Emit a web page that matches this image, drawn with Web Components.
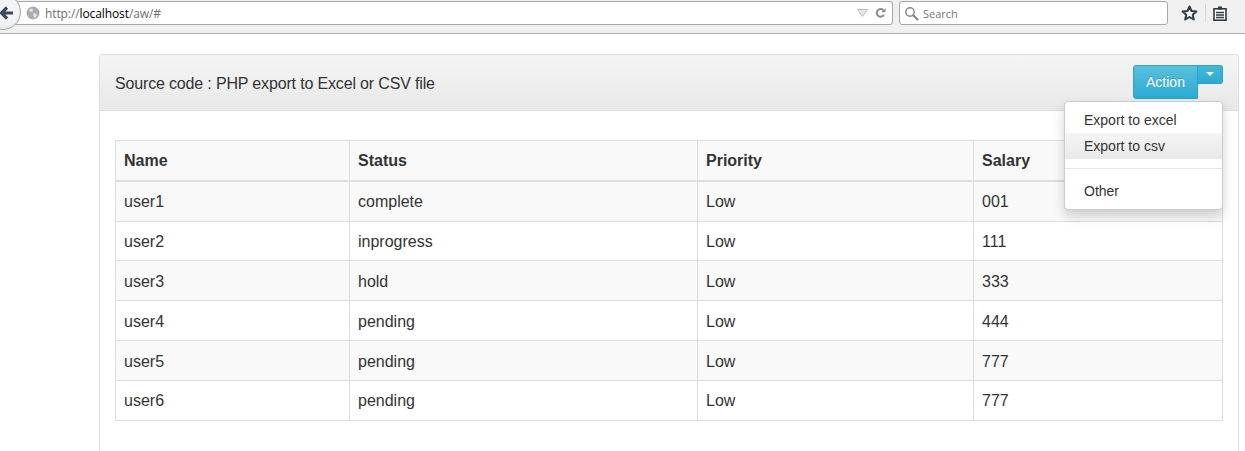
<!DOCTYPE html>
<html><head><meta charset="utf-8"><title>Export</title>
<style>html,body{margin:0;padding:0;background:#fff;overflow:hidden;height:451px}body{font-family:"Liberation Sans",Arial,sans-serif;color:#333}</style>
</head><body>
<browser-bar></browser-bar>
<export-panel heading="Source code : PHP export to Excel or CSV file">
  <action-menu slot="actions"></action-menu>
  <data-table></data-table>
</export-panel>
<script>
function def(name, html){
  customElements.define(name, class extends HTMLElement{
    connectedCallback(){
      if(this.shadowRoot) return;
      const r=this.attachShadow({mode:'open'});
      r.innerHTML=typeof html==='function'?html(this):html;
    }
  });
}
def('browser-bar',`<style>
:host{display:block;height:34px;box-sizing:border-box;background:#f0f0f0;border-bottom:1px solid #a9a9a9;position:relative;overflow:hidden}
.row{display:flex;align-items:flex-start;height:24px;padding-top:1px}
.url{margin-left:12px;flex:0 0 881px;height:24px;box-sizing:border-box;background:#fff;border:1px solid #a8a8a8;border-left:0;border-radius:0 3px 3px 0;display:flex;align-items:center;padding-left:14px;font:12px "Open Sans","Noto Sans",sans-serif;letter-spacing:-.1px;color:#6f6f6f}
.url b{font-weight:400;color:#000}
.url .txt{margin-left:5px;flex:1}
.search{margin-left:6px;flex:0 0 269px;height:24px;box-sizing:border-box;background:#fff;border:1px solid #a8a8a8;border-radius:3px;display:flex;align-items:center;padding-left:4px;font:11px "Open Sans","Noto Sans",sans-serif;color:#777}
.search span{margin-left:4px}
.tools{display:flex;align-items:center;height:24px;margin-left:13px}
.sep{width:1px;height:18px;background:#d8d8d8;margin:0 7px 0 7px}
.back{position:absolute;left:-15px;top:-6px;width:36px;height:36px;box-sizing:border-box;border-radius:50%;background:#f2f3f5;border:1px solid #a6a6a6;box-shadow:inset 0 -2px 3px rgba(0,0,0,.06)}
.back svg{position:absolute;left:13px;top:11px}
</style>
<div class="row">
<div class="url">
<svg width="14" height="14" viewBox="0 0 14 14"><circle cx="7" cy="7" r="6.5" fill="#a9adb0"/><path d="M3 3.500 6 2.500 7.500 4 6 6 4 5.500ZM7 7l3 .5 1 2-2.500 3L7.500 10Z" fill="#dfe1e3"/></svg>
<span class="txt">http://<b>localhost</b>/aw/#</span>
<svg width="11" height="8" viewBox="0 0 11 8"><path d="M.5.5h10L5.500 7.500Z" fill="#e6e8e8" stroke="#b9bdbd"/></svg>
<svg style="margin:0 6px 0 7px" width="11" height="12" viewBox="0 0 13 13"><path d="M10.500 8.500A4.500 4.500 0 1 1 9.800 3.200" fill="none" stroke="#8b8f92" stroke-width="2.400"/><path d="M7.500 5.500h5V.8Z" fill="#8b8f92"/></svg>
</div>
<div class="search">
<svg width="15" height="15" viewBox="0 0 15 15"><circle cx="6" cy="6" r="4.200" fill="#fff" stroke="#85898c" stroke-width="1.500"/><path d="M9.200 9.200 13.500 13.500" stroke="#85898c" stroke-width="2.200" stroke-linecap="round"/></svg>
<span>Search</span>
</div>
<div class="tools">
<svg width="17" height="16" viewBox="0 0 17 16"><path d="M8.500 1.500 10.500 6l4.900.5-3.700 3.200 1.100 4.800-4.300-2.500-4.300 2.500 1.100-4.800L1.600 6.500 6.500 6Z" fill="#fdfdfd" stroke="#2f3a45" stroke-width="2" stroke-linejoin="round"/></svg>
<span class="sep"></span>
<svg style="margin-left:0" width="14" height="15" viewBox="0 0 14 15"><rect x="1" y="2.800" width="12" height="11.400" fill="#fff" stroke="#2f3a45" stroke-width="1.600"/><rect x="5" y=".5" width="4" height="3" fill="#2f3a45"/><path d="M3 6.500h8M3 9h8M3 11.500h8" stroke="#2f3a45" stroke-width="1.300"/></svg>
</div>
</div>
<div class="back"><svg width="15" height="14" viewBox="0 0 15 14"><path d="M8 1.500 2.500 7 8 12.500M3 7H14" fill="none" stroke="#3c4a5a" stroke-width="3.200"/></svg></div>`);

def('export-panel',h=>`<style>
:host{display:block;box-sizing:border-box;margin:20px 6px 0 99px;height:397px;background:#fff;border:1px solid #ddd;border-bottom:0;border-radius:4px 4px 0 0}
header{height:56px;box-sizing:border-box;padding:2px 15px 0;display:flex;align-items:center;justify-content:space-between;background:linear-gradient(#f5f5f5,#e8e8e8);border-bottom:1px solid #ddd;border-radius:3px 3px 0 0}
h3{margin:0;font:400 16px/1.1 "Liberation Sans",Arial,sans-serif;letter-spacing:-.16px;color:#333}
::slotted(action-menu){margin-top:8px}
.body{padding:29px 15px 0 15px}
</style><header><h3>${h.getAttribute('heading')}</h3><slot name="actions"></slot></header><div class="body"><slot></slot></div>`);

def('action-menu',`<style>
:host{display:block;position:relative;width:90px;height:34px;align-self:flex-start;font-family:"Liberation Sans",Arial,sans-serif}
.group{display:flex;align-items:flex-start}
.btn{width:65px;height:34px;box-sizing:border-box;background:linear-gradient(#5bc0de,#2aabd2);border:1px solid #28a4c9;border-radius:3px 0 0 3px;color:#fff;font-size:14px;line-height:32px;text-align:center;text-shadow:0 -1px 0 rgba(0,0,0,.2)}
.caret{width:25px;height:19px;box-sizing:border-box;background:linear-gradient(#46b8da,#2aabd2);border:1px solid #28a4c9;border-left:0;border-radius:0 3px 3px 0;display:flex;justify-content:center;padding-top:6px}
.caret i{display:block;width:0;height:0;border:4px solid transparent;border-top-color:#fff;border-bottom:0}
.menu{position:absolute;left:-69px;top:36px;width:159px;height:109px;box-sizing:border-box;background:#fff;border:1px solid #ccc;border-radius:4px;box-shadow:0 6px 12px rgba(0,0,0,.175);padding-top:5px;font-size:14px;color:#333;z-index:2}
.item{height:26px;line-height:26px;padding-left:19px}
.item.on{background:linear-gradient(#f5f5f5,#e8e8e8)}
hr{border:0;height:1px;background:#e5e5e5;margin:9px 0}
</style><div class="group"><div class="btn">Action</div><div class="caret"><i></i></div></div>
<div class="menu"><div class="item">Export to excel</div><div class="item on">Export to csv</div><hr><div class="item">Other</div></div>`);

const rows=[['user1','complete','001'],['user2','inprogress','111'],['user3','hold','333'],['user4','pending','444'],['user5','pending','777'],['user6','pending','777']];
def('data-table',`<style>
:host{display:block;font:16px/1.42857 "Liberation Sans",Arial,sans-serif;color:#333}
table{border-collapse:collapse;width:1107px;table-layout:fixed}
td,th{border:1px solid #ddd;padding:9.4px 8px 6.6px;text-align:left;vertical-align:top;font-size:16px}
th{font-weight:700;background:#f9f9f9;border-bottom:2px solid #ddd}
tbody tr:nth-child(odd){background:#f9f9f9}
</style><table><colgroup><col style="width:234px"><col style="width:348px"><col style="width:276px"><col style="width:249px"></colgroup>
<thead><tr><th>Name</th><th>Status</th><th>Priority</th><th>Salary</th></tr></thead><tbody>
${rows.map(r=>`<tr><td>${r[0]}</td><td>${r[1]}</td><td>Low</td><td>${r[2]}</td></tr>`).join('')}
</tbody></table>`);
</script>
</body></html>
